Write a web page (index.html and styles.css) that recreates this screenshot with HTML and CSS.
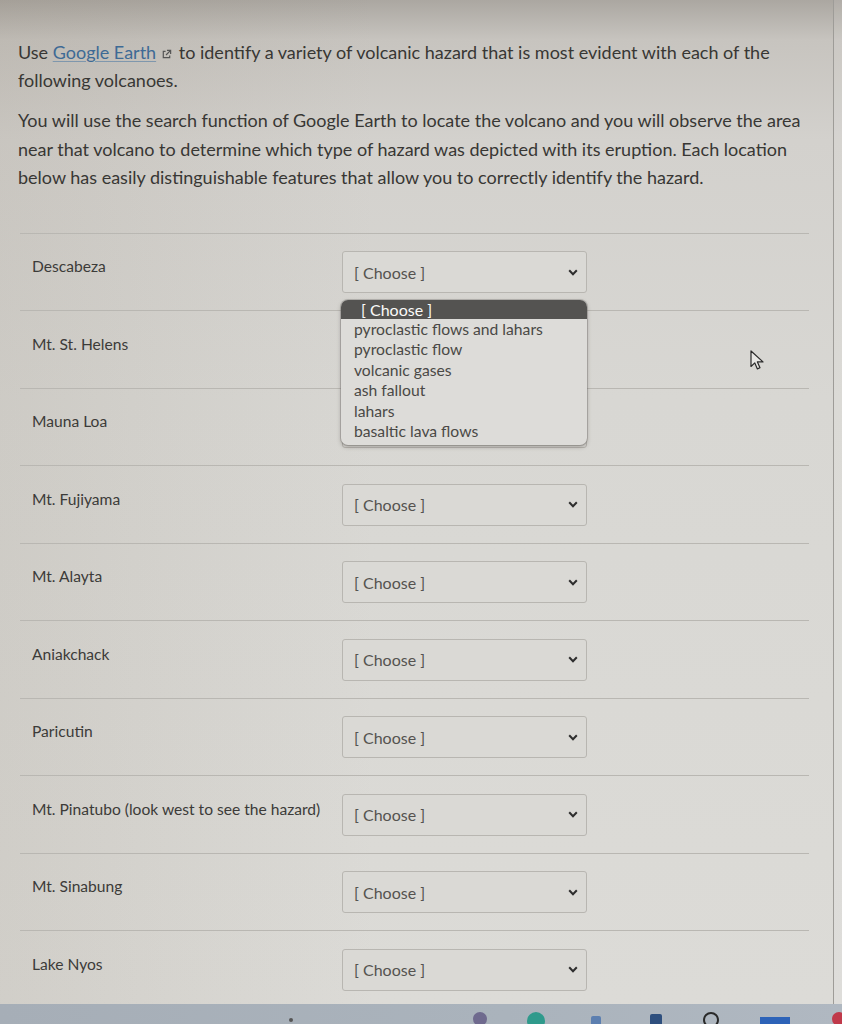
FILE: index.html
```html
<!DOCTYPE html>
<html lang="en">
<head>
<meta charset="utf-8">
<title>Volcanic hazards quiz</title>
<link rel="stylesheet" href="styles.css">
</head>
<body>
<div class="screen">
  <main class="panel">
    <section class="intro">
      <p><span>Use </span><a href="#" class="link">Google Earth</a><svg class="ext" viewBox="0 0 12 12" width="11" height="11"><path d="M5 2.5H2.5v7h7V7" fill="none" stroke="#555" stroke-width="1.3"/><path d="M6.5 1.5h4v4M10.5 1.5 5.5 6.5" fill="none" stroke="#555" stroke-width="1.3"/></svg><span> to identify a variety of volcanic hazard that is most evident with each of the </span><span>following volcanoes.</span></p>
      <p>You will use the search function of Google Earth to locate the volcano and you will observe the area near that volcano to determine which type of hazard was depicted with its eruption. Each location below has easily distinguishable features that allow you to correctly identify the hazard.</p>
    </section>

    <section class="questions">
      <div class="row">
        <div class="label">Descabeza</div>
        <div class="select-wrap">
          <div class="select"><span>[ Choose ]</span><svg class="chev" viewBox="0 0 10 7" width="10" height="7"><path d="M1.2 1.2 5 5.2 8.8 1.2" fill="none" stroke="#2e2e2e" stroke-width="2"/></svg></div>
          <ul class="menu">
            <li class="active">[ Choose ]</li>
            <li>pyroclastic flows and lahars</li>
            <li>pyroclastic flow</li>
            <li>volcanic gases</li>
            <li>ash fallout</li>
            <li>lahars</li>
            <li>basaltic lava flows</li>
          </ul>
        </div>
      </div>
      <div class="row">
        <div class="label">Mt. St. Helens</div>
        <div class="select-wrap"><div class="select covered"><span>[ Choose ]</span></div></div>
      </div>
      <div class="row">
        <div class="label">Mauna Loa</div>
        <div class="select-wrap"><div class="select covered"><span>[ Choose ]</span></div></div>
      </div>
      <div class="row">
        <div class="label">Mt. Fujiyama</div>
        <div class="select-wrap"><div class="select"><span>[ Choose ]</span><svg class="chev" viewBox="0 0 10 7" width="10" height="7"><path d="M1.2 1.2 5 5.2 8.8 1.2" fill="none" stroke="#2e2e2e" stroke-width="2"/></svg></div></div>
      </div>
      <div class="row">
        <div class="label">Mt. Alayta</div>
        <div class="select-wrap"><div class="select"><span>[ Choose ]</span><svg class="chev" viewBox="0 0 10 7" width="10" height="7"><path d="M1.2 1.2 5 5.2 8.8 1.2" fill="none" stroke="#2e2e2e" stroke-width="2"/></svg></div></div>
      </div>
      <div class="row">
        <div class="label">Aniakchack</div>
        <div class="select-wrap"><div class="select"><span>[ Choose ]</span><svg class="chev" viewBox="0 0 10 7" width="10" height="7"><path d="M1.2 1.2 5 5.2 8.8 1.2" fill="none" stroke="#2e2e2e" stroke-width="2"/></svg></div></div>
      </div>
      <div class="row">
        <div class="label">Paricutin</div>
        <div class="select-wrap"><div class="select"><span>[ Choose ]</span><svg class="chev" viewBox="0 0 10 7" width="10" height="7"><path d="M1.2 1.2 5 5.2 8.8 1.2" fill="none" stroke="#2e2e2e" stroke-width="2"/></svg></div></div>
      </div>
      <div class="row">
        <div class="label">Mt. Pinatubo (look west to see the hazard)</div>
        <div class="select-wrap"><div class="select"><span>[ Choose ]</span><svg class="chev" viewBox="0 0 10 7" width="10" height="7"><path d="M1.2 1.2 5 5.2 8.8 1.2" fill="none" stroke="#2e2e2e" stroke-width="2"/></svg></div></div>
      </div>
      <div class="row">
        <div class="label">Mt. Sinabung</div>
        <div class="select-wrap"><div class="select"><span>[ Choose ]</span><svg class="chev" viewBox="0 0 10 7" width="10" height="7"><path d="M1.2 1.2 5 5.2 8.8 1.2" fill="none" stroke="#2e2e2e" stroke-width="2"/></svg></div></div>
      </div>
      <div class="row">
        <div class="label">Lake Nyos</div>
        <div class="select-wrap"><div class="select"><span>[ Choose ]</span><svg class="chev" viewBox="0 0 10 7" width="10" height="7"><path d="M1.2 1.2 5 5.2 8.8 1.2" fill="none" stroke="#2e2e2e" stroke-width="2"/></svg></div></div>
      </div>
    </section>

    <svg class="cursor" viewBox="0 0 14 20" width="14" height="20"><path d="M1 1v15.5l3.8-3.6 2.6 6 2.6-1.1-2.6-5.9H13L1 1z" fill="#e8e7e4" stroke="#2a2a2a" stroke-width="1.2" stroke-linejoin="round"/></svg>
  </main>
  <aside class="gutter"></aside>
</div>
<footer class="taskbar">
  <span class="tb tb-a"></span>
  <span class="tb tb-b"></span>
  <span class="tb tb-c"></span>
  <span class="tb tb-d"></span>
  <span class="tb tb-e"></span>
  <span class="tb tb-f"></span>
  <span class="tb tb-g"></span>
  <span class="tb tb-h"></span>
</footer>
</body>
</html>
```

FILE: styles.css
```css
* { box-sizing: border-box; }

html, body {
  margin: 0;
  padding: 0;
  height: 1024px;
  overflow: hidden;
}

body {
  font-family: Lato, "Open Sans", "Liberation Sans", sans-serif;
  color: #383734;
  background: #d6d5d1;
}

.screen {
  display: flex;
  height: 1004px;
  background:
    linear-gradient(to right, rgba(110, 95, 75, 0.10), rgba(110, 95, 75, 0) 45%),
    linear-gradient(to bottom, #aba7a1 0px, #c7c4bf 40px, #d3d1cd 140px, #d8d7d3 400px, #dcdbd7 1004px);
}

.panel {
  position: relative;
  width: 834px;
  border-right: 1px solid #9e9c98;
  flex: none;
}

.gutter {
  flex: 1;
  background: rgba(255, 255, 255, 0.08);
}

.intro {
  padding: 38px 20px 0 18px;
  font-size: 18px;
  line-height: 28px;
}

.intro p {
  margin: 0 0 12px;
}

.intro p + p {
  line-height: 28.5px;
}

.link {
  color: #3e6a95;
  text-decoration: underline;
  text-decoration-color: #7f97ad;
  text-underline-offset: 2px;
}

.ext {
  margin: 0 2px 0 5px;
  vertical-align: -1px;
}

.questions {
  margin: 41px 24px 0 20px;
}

.row {
  display: flex;
  align-items: flex-start;
  border-top: 1px solid #b9b7b2;
  padding: 17.5px 0 17px;
}

.label {
  width: 322px;
  padding: 6px 0 0 12px;
  font-size: 15.6px;
  line-height: 19px;
  color: #3c3b39;
}

.select-wrap {
  position: relative;
  width: 245px;
}

.select {
  display: flex;
  align-items: center;
  justify-content: space-between;
  height: 42px;
  padding: 0 8px 0 11px;
  border: 1px solid #b8b6b1;
  border-radius: 3px;
  background: #dad9d5;
  font-size: 16px;
  color: #555350;
}

.select.covered span {
  visibility: hidden;
}

.chev {
  display: block;
}

.menu {
  position: absolute;
  top: 49px;
  left: -1px;
  width: 246px;
  margin: 0;
  padding: 0 0 4px;
  list-style: none;
  background: #dddcd9;
  border-radius: 7px;
  box-shadow: 0 2px 4px rgba(60, 55, 50, 0.35), 0 0 0 1px rgba(120, 118, 114, 0.35);
  overflow: hidden;
  z-index: 5;
}

.menu li {
  height: 20.4px;
  line-height: 20.4px;
  padding: 0 13px;
  font-size: 15.7px;
  color: #4a4946;
  white-space: nowrap;
}

.menu li.active {
  height: 19px;
  line-height: 19px;
  background: #545351;
  color: #fafaf8;
  padding-left: 20px;
  font-size: 16px;
}

.cursor {
  position: absolute;
  left: 750px;
  top: 350px;
}

.taskbar {
  position: relative;
  height: 20px;
  background: linear-gradient(to right, #a6aeb7, #aab3bc 60%, #b0b8c1);
  overflow: hidden;
}

.tb {
  position: absolute;
  top: 8px;
  width: 14px;
  height: 14px;
  border-radius: 50%;
}

.tb-a { left: 289px; top: 14px; width: 4px; height: 4px; background: #555; }
.tb-b { left: 473px; background: #6f6a8e; }
.tb-c { left: 527px; width: 18px; height: 18px; background: #2f9a8c; }
.tb-d { left: 591px; top: 12px; width: 10px; border-radius: 2px; background: #5c7fb0; }
.tb-e { left: 650px; top: 10px; width: 12px; border-radius: 2px; background: #2e4f7e; }
.tb-f { left: 703px; width: 16px; height: 16px; background: transparent; border: 2px solid #2a2a2a; }
.tb-g { left: 760px; top: 13px; width: 30px; height: 10px; border-radius: 0; background: #2d63b8; }
.tb-h { left: 832px; background: #c0394a; }
```
